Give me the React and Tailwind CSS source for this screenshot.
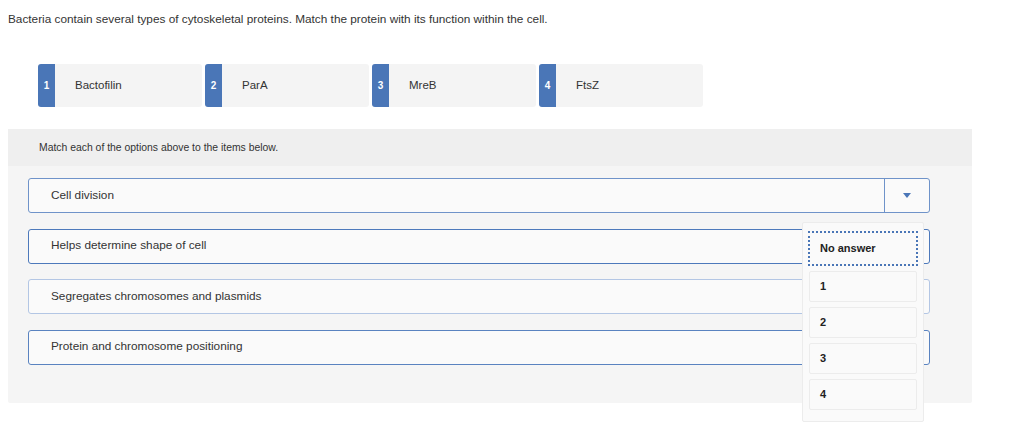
import React from 'react';

const proteins = ['Bactofilin', 'ParA', 'MreB', 'FtsZ'];

const items = [
  { text: 'Cell division', border: 'border-[#6f93c9]', select: true },
  { text: 'Helps determine shape of cell', border: 'border-[#4d79bb]' },
  { text: 'Segregates chromosomes and plasmids', border: 'border-[#b3c6e4]' },
  { text: 'Protein and chromosome positioning', border: 'border-[#5a83c0]' },
];

export default function App() {
  return (
    <div className="relative w-[1024px] h-[438px] bg-white text-[#333] font-['Liberation_Sans',Arial,sans-serif]">
      <p className="pl-2 pt-[13px] text-[11.8px] leading-[13px]">
        Bacteria contain several types of cytoskeletal proteins. Match the protein with its function within the cell.
      </p>

      <div className="mt-[38px] ml-[38px] flex gap-[3px]">
        {proteins.map((p, i) => (
          <div key={p} className="flex w-[164px] h-[43px] rounded-[3px] bg-[#f4f4f4] overflow-hidden">
            <div className="w-[17px] bg-[#4a76b7] flex items-center justify-center text-white font-bold text-[10px]">
              {i + 1}
            </div>
            <div className="flex items-center pl-[20px] text-[11.5px] text-[#333]">{p}</div>
          </div>
        ))}
      </div>

      <div className="mt-[22px] ml-2 w-[964px] h-[274px] rounded-[2px] bg-[#f5f5f5]">
        <div className="h-[37px] bg-[#efefef] flex items-center pl-[31px] pt-[1px] text-[10.4px] text-[#333]">
          Match each of the options above to the items below.
        </div>
        <div className="pl-5 pr-[42px] pt-[12px] flex flex-col gap-[15.5px]">
          {items.map((it) => (
            <div
              key={it.text}
              className={`flex h-[35px] rounded-[3px] border ${it.border} bg-[#fafafa]`}
            >
              <div className="flex-1 flex items-center pl-[22px] text-[11.8px] text-[#333]">{it.text}</div>
              {it.select && (
                <div className="w-[45px] border-l border-[#6f93c9] flex items-center justify-center">
                  <svg width="8" height="5" viewBox="0 0 8 5">
                    <path d="M0 0 H8 L4 5 Z" fill="#4a76b7" />
                  </svg>
                </div>
              )}
            </div>
          ))}
        </div>
      </div>

      <div className="absolute left-[802px] top-[222px] w-[122px] h-[200px] rounded-[2px] bg-[#fafafa] border border-[#ececec] px-[5px] pt-[8px] flex flex-col gap-[5px]">
        <div className="h-[35px] border-2 border-dotted border-[#4a76b7] flex items-center pl-[10px] text-[11px] font-bold text-[#222]">
          No answer
        </div>
        {[1, 2, 3, 4].map((n) => (
          <div
            key={n}
            className="h-[31px] mx-[1px] rounded-[2px] border border-[#ececec] bg-[#fafafa] flex items-center pl-[10px] text-[11px] font-bold text-[#222]"
          >
            {n}
          </div>
        ))}
      </div>
    </div>
  );
}
